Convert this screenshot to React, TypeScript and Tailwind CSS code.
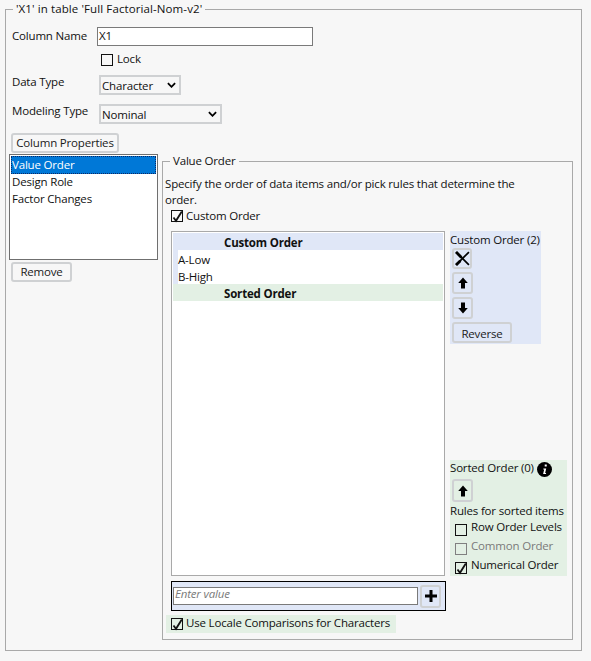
import React from "react";

const font = { fontFamily: '"Open Sans", "Noto Sans", sans-serif' };

function Check({ checked = false, muted = false, className = "" }: { checked?: boolean; muted?: boolean; className?: string }) {
  return (
    <span className={`relative block w-[12px] h-[12px] border shrink-0 ${muted ? "border-[#808080]" : "border-[#111]"} bg-transparent ${className}`}>
      {checked && (
        <svg viewBox="0 0 12 12" className="absolute left-0 top-0 w-[12px] h-[12px] overflow-visible">
          <path d="M1.5 6.5 L4 9.8 L9.8 0.5" fill="none" stroke="#111" strokeWidth="1.8" />
        </svg>
      )}
    </span>
  );
}

function Chevron() {
  return (
    <svg viewBox="0 0 10 6" className="w-[9px] h-[6px]">
      <path d="M1 1 L5 5 L9 1" fill="none" stroke="#000" strokeWidth="2" />
    </svg>
  );
}

function Btn({ className = "", children }: { className?: string; children?: React.ReactNode }) {
  return (
    <div className={`flex items-center justify-center border-2 border-[#cfd1d3] rounded-[3px] text-[#1a1a1a] ${className}`}>{children}</div>
  );
}

function Up() {
  return (
    <svg viewBox="0 0 10 12" className="w-[10px] h-[12px]">
      <path d="M5 0.5 L9.8 6 L7 6 L7 11.5 L3 11.5 L3 6 L0.2 6 Z" fill="#000" />
    </svg>
  );
}

function Down() {
  return (
    <svg viewBox="0 0 10 12" className="w-[10px] h-[12px]">
      <path d="M5 11.5 L9.8 6 L7 6 L7 0.5 L3 0.5 L3 6 L0.2 6 Z" fill="#000" />
    </svg>
  );
}

export default function App() {
  return (
    <div style={font} className="w-[591px] h-[661px] overflow-hidden bg-[#f7f7f7] text-[11.5px] leading-[16px] text-[#111] tracking-[-0.18px]">
      <div className="h-px" />
      <fieldset className="ml-[5px] w-[577px] h-[650px] border border-[#a9a9a9] p-0 pl-[6px]">
        <legend className="ml-[1px] px-[3px] h-[16px] tracking-[0.1px]">'X1' in table 'Full Factorial-Nom-v2'</legend>

        <div className="mt-[10px] flex items-start h-[19px]">
          <span className="w-[85px] pt-px">Column Name</span>
          <div className="w-[216px] h-[19px] bg-white border border-[#7a7a7a] leading-[15px] pl-px">X1</div>
        </div>

        <div className="mt-[8px] flex items-center h-[12px] pl-[89px]">
          <Check />
          <span className="ml-[4px] -mt-[2px]">Lock</span>
        </div>

        <div className="mt-[9px] flex items-start h-[20px]">
          <span className="w-[87px] -mt-px">Data Type</span>
          <div className="w-[82px] h-[20px] border-2 border-[#cfd1d3] flex items-center justify-between pl-[1px] pr-[3px]">
            <span className="pt-[2px]">Character</span>
            <Chevron />
          </div>
        </div>

        <div className="mt-[9px] flex items-start h-[20px]">
          <span className="w-[87px] -mt-px">Modeling Type</span>
          <div className="w-[123px] h-[20px] border-2 border-[#cfd1d3] flex items-center justify-between pl-[1px] pr-[3px]">
            <span className="pt-[2px]">Nominal</span>
            <Chevron />
          </div>
        </div>

        <Btn className="mt-[9px] -ml-px w-[108px] h-[20px]">Column Properties</Btn>

        <div className="flex items-start -ml-[3px] mt-px">
          <div className="w-[149px] shrink-0">
            <div className="h-[106px] border border-[#6f6f6f] bg-white p-px">
              <div className="h-[18px] bg-[#0078d7] text-white border border-dotted border-[#0b2a66] leading-[16px]">Value Order</div>
              <div className="h-[17px] pl-px leading-[15px]">Design Role</div>
              <div className="h-[17px] pl-px leading-[15px]">Factor Changes</div>
            </div>
            <Btn className="mt-[2px] ml-[2px] w-[61px] h-[20px]">Remove</Btn>
          </div>

          <fieldset className="ml-[4px] w-[411px] h-[487px] border border-[#a9a9a9] p-0 -mt-px">
            <legend className="ml-[7px] px-[3px] h-[16px]">Value Order</legend>
            <div className="mt-[7px] ml-[2px] w-[375px] leading-[16px]">Specify the order of data items and/or pick rules that determine the order.</div>
            <div className="mt-[2px] ml-[8px] flex items-center h-[12px]">
              <Check checked />
              <span className="ml-[3px]">Custom Order</span>
            </div>

            <div className="mt-[9px] ml-[8px] flex items-start">
              <div className="w-[274px] h-[345px] border border-[#a9a9a9] bg-white p-px">
                <div className="h-[17px] bg-[#e0e7f7] font-bold leading-[20px] pl-[51px]">Custom Order</div>
                <div className="bg-[#e0e7f7] pl-[5px]">
                  <div className="bg-white">
                    <div className="h-[17px] leading-[19px]">A-Low</div>
                    <div className="h-[17px] leading-[19px]">B-High</div>
                  </div>
                </div>
                <div className="h-[17px] bg-[#e3f0e4] font-bold leading-[20px] pl-[51px]">Sorted Order</div>
              </div>

              <div className="ml-[5px] h-[345px] flex flex-col justify-between">
                <div className="w-[91px] h-[113px] bg-[#e0e7f7] pl-[2px]">
                  <div className="h-[17px] -ml-[2px] leading-[17px] whitespace-nowrap">Custom Order (2)</div>
                  <Btn className="w-[20px] h-[21px]">
                    <svg viewBox="0 0 14 14" className="w-[15px] h-[15px]">
                      <path d="M1 1 L13 13" stroke="#000" strokeWidth="1.6" />
                      <path d="M13 1 L1 13" stroke="#000" strokeWidth="1.6" />
                      <path d="M1 1 L6 6" stroke="#000" strokeWidth="2.6" />
                      <path d="M1 13 L5 9" stroke="#000" strokeWidth="2.6" />
                    </svg>
                  </Btn>
                  <Btn className="mt-[3px] w-[21px] h-[22px]"><Up /></Btn>
                  <Btn className="mt-[3px] w-[21px] h-[22px]"><Down /></Btn>
                  <Btn className="mt-[3px] w-[60px] h-[21px] pt-[2px]">Reverse</Btn>
                </div>

                <div className="w-[117px] h-[116px] bg-[#e3f0e4]">
                  <div className="h-[18px] flex items-center whitespace-nowrap">
                    <span className="-mt-[2px]">Sorted Order (0)</span>
                    <svg viewBox="0 0 14 14" className="ml-[3px] w-[15px] h-[15px]">
                      <circle cx="7" cy="7" r="7" fill="#000" />
                      <path d="M7.2 2.4 h1.9 v1.8 h-1.9 Z M6 6 h2.6 l-1 4.2 h1 l-0.3 1 h-2.6 l1-4.2 h-0.9 Z" fill="#fff" />
                    </svg>
                  </div>
                  <Btn className="mt-px ml-[2px] w-[21px] h-[23px]"><Up /></Btn>
                  <div className="h-[16px] mt-px leading-[16px] whitespace-nowrap">Rules for sorted items</div>
                  <div className="h-[19px] pl-[5px] flex items-center mt-px">
                    <Check />
                    <span className="ml-[4px] -mt-[5px]">Row Order Levels</span>
                  </div>
                  <div className="h-[19px] pl-[5px] flex items-center text-[#7a7a7a]">
                    <Check muted />
                    <span className="ml-[4px] -mt-[5px]">Common Order</span>
                  </div>
                  <div className="h-[19px] pl-[5px] flex items-center">
                    <Check checked />
                    <span className="ml-[4px] -mt-[5px]">Numerical Order</span>
                  </div>
                </div>
              </div>
            </div>

            <div className="mt-[5px] ml-[8px] w-[275px] h-[30px] border border-black bg-[#e0e7f7] flex items-center pl-[1px]">
              <div className="w-[245px] h-[18px] bg-white border border-[#7a7a7a] italic text-[#7a7a7a] leading-[12px] pl-px">Enter value</div>
              <Btn className="ml-[2px] w-[21px] h-[23px]">
                <svg viewBox="0 0 12 12" className="w-[12px] h-[12px]">
                  <path d="M4.5 0 h3 v4.5 h4.5 v3 h-4.5 v4.5 h-3 v-4.5 h-4.5 v-3 h4.5 Z" fill="#000" />
                </svg>
              </Btn>
            </div>

            <div className="mt-[4px] ml-[3px] w-[230px] h-[18px] bg-[#e3f0e4] flex items-center pl-[5px]">
              <Check checked />
              <span className="ml-[3px] -mt-[2px] whitespace-nowrap">Use Locale Comparisons for Characters</span>
            </div>
          </fieldset>
        </div>
      </fieldset>
    </div>
  );
}
